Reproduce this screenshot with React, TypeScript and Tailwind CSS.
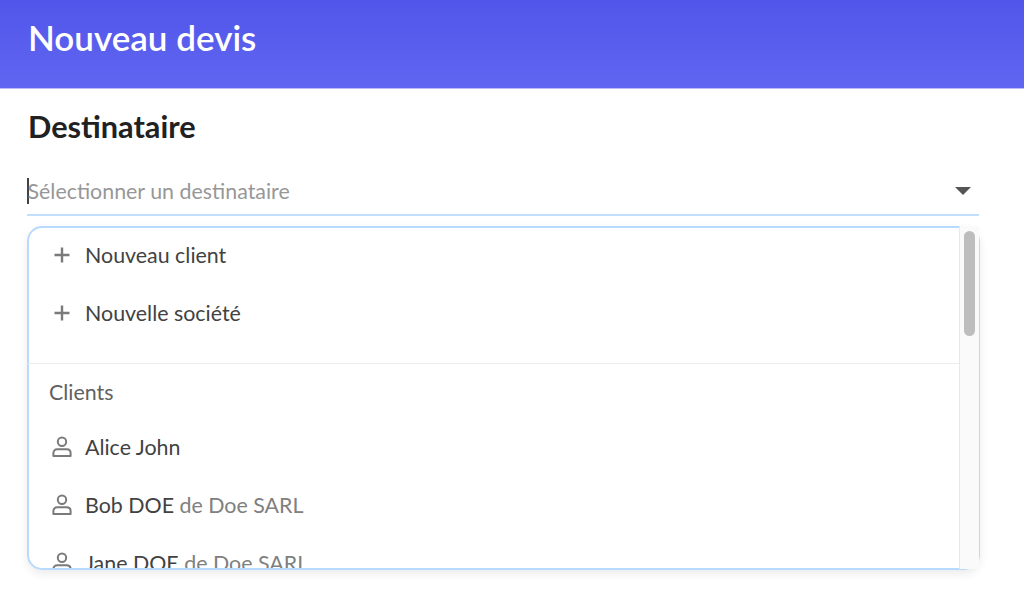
import React from 'react';

function PlusIcon() {
  return (
    <svg width="24" height="24" viewBox="0 0 24 24" className="shrink-0">
      <path d="M12 4.5v15M4.5 12h15" stroke="#7a7a7a" strokeWidth="2.4" fill="none" />
    </svg>
  );
}

function PersonIcon() {
  return (
    <svg width="24" height="24" viewBox="0 0 24 24" fill="none" className="shrink-0">
      <circle cx="12" cy="6.7" r="4.2" stroke="#7a7a7a" strokeWidth="2" />
      <path
        d="M7.2 14.3h9.6c2.3 0 3.8 1.6 3.8 3.8v2.8H3.4v-2.8c0-2.2 1.5-3.8 3.8-3.8z"
        stroke="#7a7a7a"
        strokeWidth="2"
        strokeLinejoin="round"
      />
    </svg>
  );
}

function Row({ icon, name, company }: { icon: React.ReactNode; name: string; company?: string }) {
  return (
    <div className="flex h-[58px] shrink-0 items-center gap-[11px] pl-[22px]">
      {icon}
      <span className="text-[21.4px] text-[#424242]">
        {name}
        {company && <span className="text-[#808080]"> {company}</span>}
      </span>
    </div>
  );
}

export default function App() {
  return (
    <div className="h-[611px] w-[1024px] overflow-hidden bg-white font-['Lato',sans-serif]">
      {/* Header */}
      <header className="flex h-[89px] items-start border-b border-[#b9bcf7] bg-gradient-to-b from-[#5255ea] to-[#6066f1] px-7 pt-[15px]">
        <h1 className="text-[35px] leading-[44px] font-semibold text-white">Nouveau devis</h1>
      </header>

      <main className="px-[27px]">
        <h2 className="ml-px mt-[17px] text-[30.7px] leading-[42px] font-bold text-[#212121]">Destinataire</h2>

        {/* Select input */}
        <div className="mt-[21px] flex h-[47px] w-[952px] items-center border-b-2 border-[#c2dfff] pr-[8px] pb-[1px]">
          <span className="h-[26px] w-[1.5px] shrink-0 bg-[#424242]" />
          <span className="-ml-px text-[21.4px] text-[#979797]">Sélectionner un destinataire</span>
          <svg width="16" height="8" viewBox="0 0 16 8" className="ml-auto">
            <path d="M0 0h16L8 8z" fill="#555555" />
          </svg>
        </div>

        {/* Dropdown */}
        <div className="relative mt-[10px] h-[344px] w-[953px] rounded-[15px] border-2 border-[#b8dafe] shadow-[0_4px_10px_rgba(0,0,0,0.08)]">
          <div className="-ml-px -mt-[2px] flex h-[342px] w-[932px] flex-col overflow-hidden rounded-l-[14px]">
            <Row icon={<PlusIcon />} name="Nouveau client" />
            <Row icon={<PlusIcon />} name="Nouvelle société" />
            <div className="mt-[21px] h-px shrink-0 bg-[#ececec]" />
            <div className="flex h-[54px] shrink-0 items-center pl-[21px] pt-[2px] text-[21.4px] text-[#616161]">Clients</div>
            <Row icon={<PersonIcon />} name="Alice John" />
            <Row icon={<PersonIcon />} name="Bob DOE" company="de Doe SARL" />
            <Row icon={<PersonIcon />} name="Jane DOE" company="de Doe SARL" />
          </div>

          {/* Scrollbar over the border */}
          <div className="absolute -top-[2px] -right-px flex h-[343px] w-[20px] justify-center border-l border-[#e8e8e8] bg-[#fafafa] pt-[5px]">
            <div className="h-[105px] w-[11px] rounded-full bg-[#bdbdbd]" />
          </div>
        </div>
      </main>
    </div>
  );
}
